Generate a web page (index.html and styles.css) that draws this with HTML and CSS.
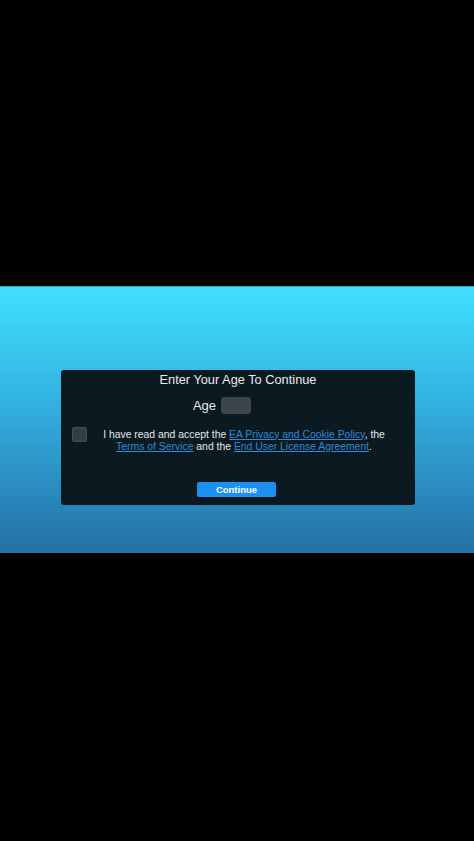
FILE: index.html
```html
<!DOCTYPE html>
<html>
<head>
<meta charset="utf-8">
<link rel="stylesheet" href="styles.css">
</head>
<body>
<div class="screen">
  <div class="stage">
    <div class="dialog">
      <div class="title">Enter Your Age To Continue</div>
      <div class="age-row">
        <span class="age-label">Age</span>
        <span class="age-input"></span>
      </div>
      <div class="consent-row">
        <span class="checkbox"></span>
        <p class="consent">I have read and accept the <a href="#">EA Privacy and Cookie Policy</a>, the<br><a href="#">Terms of Service</a> and the <a href="#">End User License Agreement</a>.</p>
      </div>
      <div class="actions">
        <button class="continue">Continue</button>
      </div>
    </div>
  </div>
</div>
</body>
</html>
```

FILE: styles.css
```css
html, body {
  margin: 0;
  padding: 0;
  background: #000;
}
body {
  width: 474px;
  height: 841px;
  font-family: "Liberation Sans", Arial, sans-serif;
  overflow: hidden;
}
.screen {
  padding-top: 286px;
}
.stage {
  height: 267px;
  background: linear-gradient(to bottom, #41e1fe 0%, #33b5e2 40%, #2a8cc0 75%, #2472a4 100%);
  border-top: 1px solid #2c9fbd;
  box-sizing: border-box;
  display: flex;
  justify-content: center;
  padding-top: 83px;
  padding-left: 2px;
}
.dialog {
  width: 354px;
  height: 135px;
  box-sizing: border-box;
  background: #0b1920;
  border-radius: 3px;
  padding-top: 2px;
  display: flex;
  flex-direction: column;
}
.title {
  color: #e6ecef;
  font-size: 12.8px;
  line-height: 15px;
  text-align: center;
}
.age-row {
  margin-top: 10px;
  display: flex;
  justify-content: center;
  align-items: center;
  gap: 5px;
  padding-right: 32px;
  height: 17px;
}
.age-label {
  color: #e6ecef;
  font-size: 13px;
  line-height: 15px;
}
.age-input {
  width: 30px;
  height: 17px;
  background: #3b454b;
  border-radius: 3px;
}
.consent-row {
  margin-top: 13px;
  display: flex;
  align-items: flex-start;
  padding-left: 11px;
}
.checkbox {
  width: 15px;
  height: 15px;
  box-sizing: border-box;
  background: #363e43;
  border: 1px solid #454e54;
  border-radius: 2px;
  flex: none;
}
.consent {
  flex: 1;
  margin: 1.5px 0 0;
  padding-right: 14px;
  color: #e3e9ec;
  font-size: 10.4px;
  line-height: 12px;
  text-align: center;
}
.consent a {
  color: #2b8bd8;
  text-decoration: underline;
}
.actions {
  margin-top: auto;
  margin-bottom: 8px;
  padding-right: 3px;
  display: flex;
  justify-content: center;
}
.continue {
  width: 79px;
  height: 15px;
  padding: 0;
  border: none;
  border-radius: 2px;
  background: #1a90f3;
  color: #fff;
  font-family: "Liberation Sans", Arial, sans-serif;
  font-weight: bold;
  font-size: 9.5px;
  line-height: 15px;
}
```
